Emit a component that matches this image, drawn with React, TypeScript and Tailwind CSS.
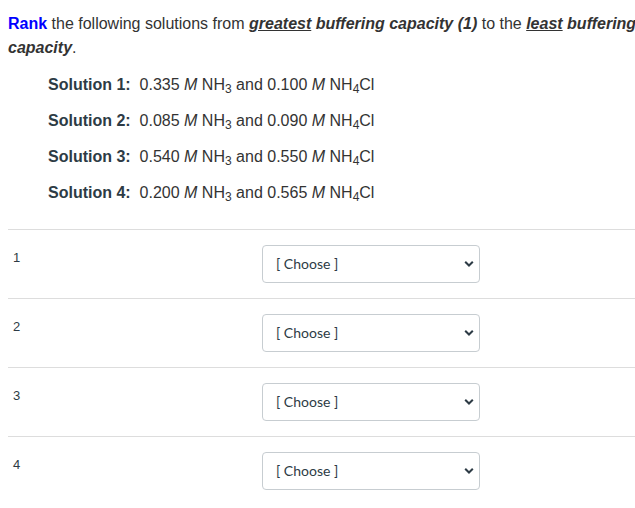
import React from "react";

const solutions = [
  { n: 1, a: "0.335", b: "0.100" },
  { n: 2, a: "0.085", b: "0.090" },
  { n: 3, a: "0.540", b: "0.550" },
  { n: 4, a: "0.200", b: "0.565" },
];

function Chevron() {
  return (
    <svg width="10" height="7" viewBox="0 0 10 7" className="absolute right-[5px] top-1/2 -translate-y-1/2">
      <path d="M1.2 1.2 L5 5 L8.8 1.2" fill="none" stroke="#2d3b45" strokeWidth="2" />
    </svg>
  );
}

export default function App() {
  return (
    <div className="w-[660px] bg-white pl-[8px] pt-[12px] text-[#333] font-['Liberation_Sans',Arial,sans-serif] text-[16px] leading-[24px]">
      {/* Question */}
      <p className="pr-[20px]">
        <span className="font-bold text-[#0000ff]">Rank</span> the following solutions from{" "}
        <em className="font-bold"><u>greatest</u> buffering capacity (1)</em> to the{" "}
        <em className="font-bold"><u>least</u> buffering capacity</em>.
      </p>

      {/* Solutions */}
      <div className="mt-[13px] ml-[40px] flex flex-col gap-[12px]">
        {solutions.map((s) => (
          <p key={s.n}>
            <span className="font-bold text-[#2d3b45]">Solution {s.n}:</span>
            {"\u00a0 "}
            {s.a} <em>M</em> NH<sub className="text-[12px]">3</sub> and {s.b} <em>M</em> NH
            <sub className="text-[12px]">4</sub>Cl
          </p>
        ))}
      </div>

      {/* Answer rows */}
      <div className="mt-[24px]">
        {[1, 2, 3, 4].map((n) => (
          <div key={n} className="flex border-t border-[#dddddd] h-[69px]">
            <div className="w-[254px] pl-[5px] pt-[16px] text-[13px] leading-[24px] text-[#2d3b45]">{n}</div>
            <div className="pt-[15px]">
              <div className="relative w-[218px] h-[38px] rounded-[4px] border border-[#c7cdd1] bg-white flex items-center pl-[13px] font-['Lato',sans-serif] text-[14px] text-[#2d3b45]">
                [ Choose ]
                <Chevron />
              </div>
            </div>
          </div>
        ))}
      </div>
    </div>
  );
}
